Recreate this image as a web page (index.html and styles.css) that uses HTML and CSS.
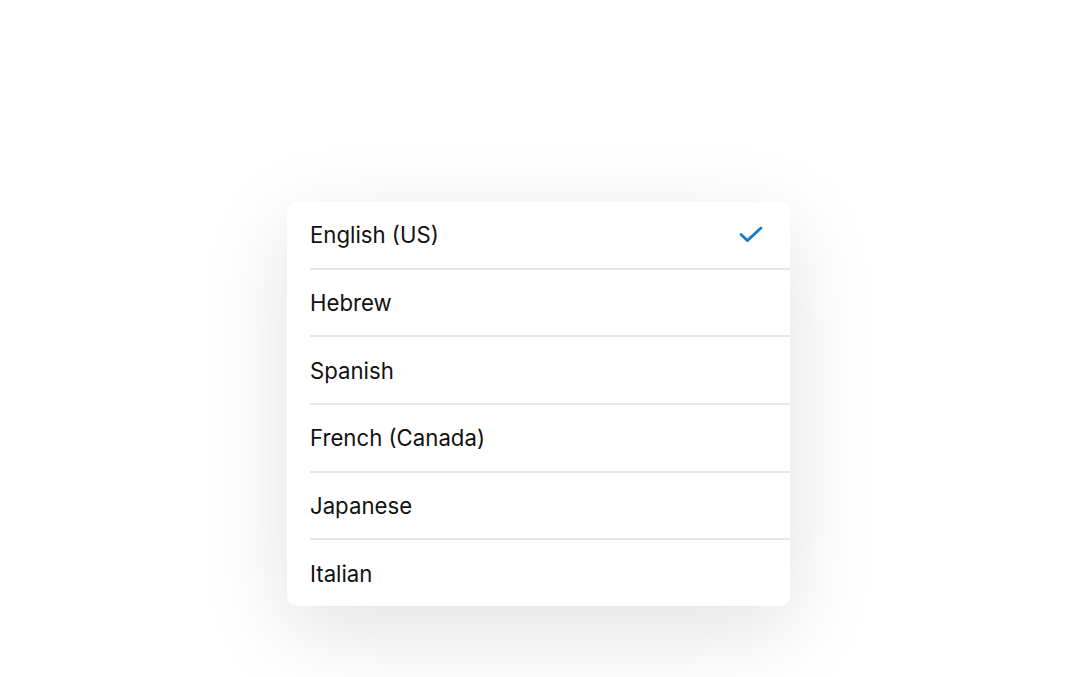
FILE: index.html
```html
<!DOCTYPE html>
<html lang="en">
<head>
    <meta charset="UTF-8">
    <meta name="viewport" content="width=device-width, initial-scale=1.0">
    <title>Language</title>
    <link rel="stylesheet" href="styles.css">
</head>
<body>

    <!-- Language list -->
    <div class="menu">
        <div class="item">
            <span>English (US)</span>
            <svg class="check" width="24" height="17" viewBox="0 0 24 17">
                <path d="M2 8.5 L8.3 14.6 L22 2" fill="none" stroke="#1c7bc4" stroke-width="2.8" stroke-linecap="round" stroke-linejoin="round"/>
            </svg>
        </div>
        <div class="item"><span>Hebrew</span></div>
        <div class="item"><span>Spanish</span></div>
        <div class="item"><span>French (Canada)</span></div>
        <div class="item"><span>Japanese</span></div>
        <div class="item last"><span>Italian</span></div>
    </div>

</body>
</html>
```

FILE: styles.css
```css
html, body {
    height: 100%;
}
body {
    margin: 0;
    background: white;
    font-family: Inter, "Noto Sans", sans-serif;
    overflow: hidden;
}
.menu {
    width: 503px;
    height: 404px;
    margin: 202px 0 0 287px;
    background: white;
    border-radius: 10px;
    box-shadow: 0 24px 90px rgba(0, 0, 0, 0.12);
    display: flex;
    flex-direction: column;
    padding-left: 23px;
    box-sizing: border-box;
}
.item {
    flex: 1;
    display: flex;
    align-items: center;
    justify-content: space-between;
    border-bottom: 2px solid #e6e6e6;
    font-size: 22.2px;
    color: #111;
    padding-right: 27px;
}
.item.last {
    border-bottom: none;
}
.check {
    width: 24px;
    height: 17px;
}
```
